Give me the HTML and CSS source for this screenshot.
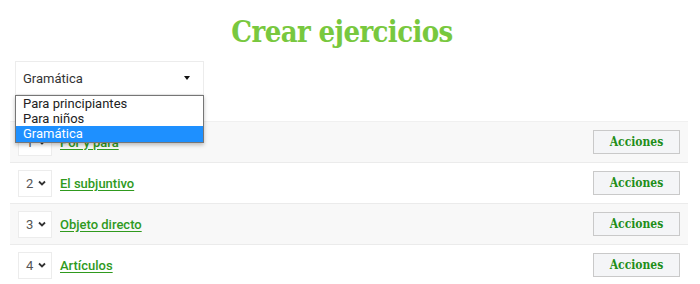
FILE: index.html
```html
<!DOCTYPE html>
<html lang="es">
<head>
<meta charset="utf-8">
<link rel="stylesheet" href="styles.css">
</head>
<body>
<div class="page">
  <h1 class="title">Crear ejercicios</h1>
  <div class="filter">
    <div class="select">
      <span>Gramática</span>
      <span class="caret"></span>
    </div>
    <ul class="options">
      <li>Para principiantes</li>
      <li>Para niños</li>
      <li class="active">Gramática</li>
    </ul>
  </div>
  <div class="list">
    <div class="row alt">
      <div class="num"><span>1</span><svg width="8" height="6" viewBox="0 0 8 6"><path d="M1 1.5 L4 4.5 L7 1.5" fill="none" stroke="#333" stroke-width="1.8"/></svg></div>
      <a class="link" href="#">Por y para</a>
      <button class="btn">Acciones</button>
    </div>
    <div class="row">
      <div class="num"><span>2</span><svg width="8" height="6" viewBox="0 0 8 6"><path d="M1 1.5 L4 4.5 L7 1.5" fill="none" stroke="#333" stroke-width="1.8"/></svg></div>
      <a class="link" href="#">El subjuntivo</a>
      <button class="btn">Acciones</button>
    </div>
    <div class="row alt">
      <div class="num"><span>3</span><svg width="8" height="6" viewBox="0 0 8 6"><path d="M1 1.5 L4 4.5 L7 1.5" fill="none" stroke="#333" stroke-width="1.8"/></svg></div>
      <a class="link" href="#">Objeto directo</a>
      <button class="btn">Acciones</button>
    </div>
    <div class="row">
      <div class="num"><span>4</span><svg width="8" height="6" viewBox="0 0 8 6"><path d="M1 1.5 L4 4.5 L7 1.5" fill="none" stroke="#333" stroke-width="1.8"/></svg></div>
      <a class="link" href="#">Artículos</a>
      <button class="btn">Acciones</button>
    </div>
  </div>
</div>
</body>
</html>
```
FILE: styles.css
```css
html, body {
  margin: 0;
  padding: 0;
  background: #fff;
  font-family: Roboto, "Noto Sans", sans-serif;
  color: #333;
}
.page {
  width: 678px;
  padding: 0 12px 0 10px;
  overflow: hidden;
  height: 284px;
}
.title {
  margin: 0;
  padding-top: 13px;
  height: 61px;
  box-sizing: border-box;
  text-align: center;
  font-family: "DejaVu Serif Condensed", "DejaVu Serif", serif;
  font-stretch: condensed;
  font-weight: bold;
  font-size: 29px;
  letter-spacing: -0.6px;
  line-height: 38px;
  color: #78c83e;
  padding-right: 14px;
}
.filter {
  position: relative;
  margin-left: 5px;
  width: 189px;
  height: 60px;
}
.select {
  height: 34px;
  box-sizing: border-box;
  border: 1px solid #ececec;
  display: flex;
  align-items: center;
  justify-content: space-between;
  padding: 0 13px 0 7px;
  font-size: 13px;
  color: #333;
}
.caret {
  width: 0;
  height: 0;
  border-left: 3.5px solid transparent;
  border-right: 3.5px solid transparent;
  border-top: 4px solid #111;
}
.options {
  position: absolute;
  left: 0;
  top: 34px;
  width: 189px;
  box-sizing: border-box;
  margin: 0;
  padding: 0;
  list-style: none;
  background: #fff;
  border: 1px solid #767676;
  box-shadow: 0 2px 4px rgba(0,0,0,0.25);
  z-index: 2;
  font-size: 13px;
}
.options li {
  height: 15px;
  line-height: 15px;
  padding-left: 7px;
  color: #222;
}
.options li.active {
  background: #1e90ff;
  color: #fff;
  height: 16px;
  line-height: 16px;
}
.list {
  border-top: 1px solid #f0f0f0;
}
.row {
  height: 41px;
  box-sizing: border-box;
  border-bottom: 1px solid #ebebeb;
  display: flex;
  align-items: center;
  padding: 0 8px;
  gap: 8px;
  background: #fff;
}
.row.alt {
  background: #f8f8f8;
}
.num {
  width: 34px;
  height: 27px;
  box-sizing: border-box;
  border: 1px solid #ececec;
  background: #fff;
  display: flex;
  align-items: center;
  justify-content: space-between;
  padding: 0 5px 0 7px;
  font-size: 13px;
  color: #555;
}
.num svg {
  display: block;
}
.link {
  font-size: 13px;
  font-weight: 500;
  color: #2f9a1e;
  text-decoration: underline;
  text-underline-offset: 2px;
}
.btn {
  margin-left: auto;
  width: 87px;
  height: 24px;
  box-sizing: border-box;
  border: 1px solid #c9c9c9;
  background: #f4f5f7;
  font-family: "DejaVu Serif Condensed", "DejaVu Serif", serif;
  font-stretch: condensed;
  font-weight: bold;
  font-size: 12px;
  color: #1f8e1a;
  padding: 0;
}
```
